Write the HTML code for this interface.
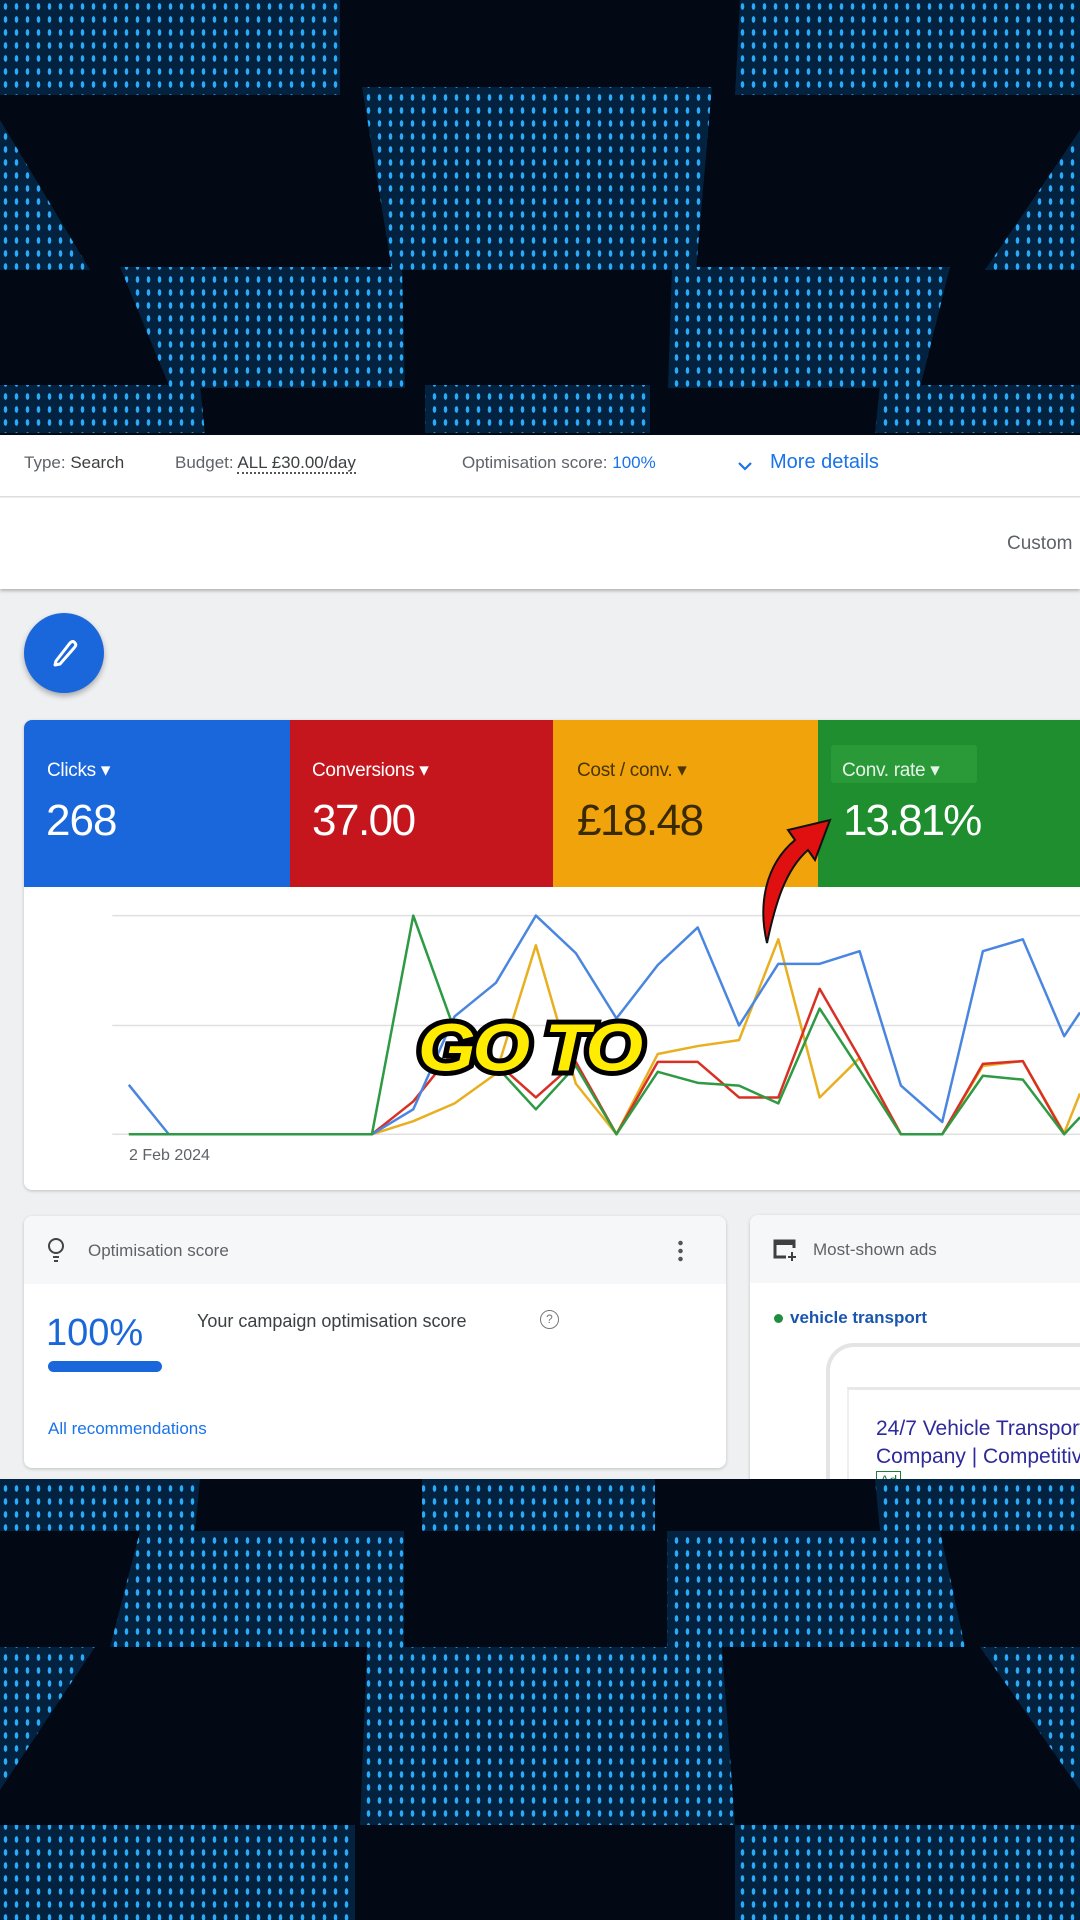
<!DOCTYPE html>
<html><head><meta charset="utf-8"><style>
*{margin:0;padding:0;box-sizing:border-box}
body{width:1080px;height:1920px;overflow:hidden;background:#020814;font-family:"Liberation Sans",sans-serif;position:relative}
.abs{position:absolute}
.t{position:absolute;white-space:nowrap}
</style></head><body>
<svg class="abs" style="left:0;top:0" width="1080" height="1920">
<defs>
<pattern id="d" width="11" height="13" patternUnits="userSpaceOnUse">
<rect width="11" height="13" fill="#03223f"/>
<ellipse cx="5.5" cy="6.5" rx="1.8" ry="3.4" fill="#2aaaf8"/>
</pattern>
</defs>
<rect width="1080" height="1920" fill="#020814"/>
<g fill="url(#d)">
<polygon points="0,0 340,0 340,95 0,95"/>
<polygon points="740,0 1080,0 1080,95 735,95"/>
<polygon points="362,87 712,87 696,270 392,270"/>
<polygon points="0,120 0,270 90,270"/>
<polygon points="1080,130 985,270 1080,270"/>
<polygon points="120,267 402,267 405,388 170,388"/>
<polygon points="672,267 950,267 920,388 668,388"/>
<polygon points="0,385 200,385 205,433 0,433"/>
<polygon points="425,385 650,385 650,433 425,433"/>
<polygon points="880,385 1080,385 1080,433 875,433"/>
<polygon points="0,1479 200,1479 195,1531 0,1531"/>
<polygon points="422,1479 655,1479 655,1531 422,1531"/>
<polygon points="875,1479 1080,1479 1080,1531 880,1531"/>
<polygon points="140,1531 404,1531 404,1647 110,1647"/>
<polygon points="667,1531 940,1531 965,1647 667,1647"/>
<polygon points="367,1647 722,1647 735,1825 360,1825"/>
<polygon points="0,1647 95,1647 0,1790"/>
<polygon points="980,1647 1080,1647 1080,1790"/>
<polygon points="0,1825 355,1825 355,1920 0,1920"/>
<polygon points="735,1825 1080,1825 1080,1920 735,1920"/>
</g>
</svg>

<div class="abs" style="left:0;top:435px;width:1080px;height:1044px;background:#eef0f1;overflow:hidden">
 <div class="abs" style="left:0;top:0;width:1080px;height:62px;background:#fff;border-bottom:1px solid #ddd"></div>
 <div class="t" style="left:24px;top:18px;font-size:17px;color:#5f6368">Type: <span style="color:#3c4043">Search</span></div>
 <div class="t" style="left:175px;top:18px;font-size:17px;color:#5f6368">Budget: <span style="color:#3c4043;border-bottom:2px dotted #555">ALL £30.00/day</span></div>
 <div class="t" style="left:462px;top:18px;font-size:17px;color:#5f6368">Optimisation score: <span style="color:#1a73e8">100%</span></div>
 <svg class="abs" style="left:736px;top:22px" width="18" height="18"><path d="M3 6l6 6 6-6" fill="none" stroke="#1a73e8" stroke-width="2.2"/></svg>
 <div class="t" style="left:770px;top:16px;font-size:20px;color:#1a73e8">More details</div>
 <div class="abs" style="left:0;top:63px;width:1080px;height:91px;background:#fff;box-shadow:0 2px 3px rgba(0,0,0,.25)"></div>
 <div class="t" style="left:1007px;top:98px;font-size:19px;color:#5f6368">Custom</div>
 <div class="abs" style="left:24px;top:178px;width:80px;height:80px;border-radius:50%;background:#1a66db;box-shadow:0 3px 6px rgba(0,0,0,.3)">
  <svg width="80" height="80"><path d="M32 48 L46 30 Q49 27 51 30 Q53 32 50 35 L36 51 L31 52 Z" fill="none" stroke="#fff" stroke-width="3" stroke-linejoin="round"/></svg>
 </div>
 <div class="abs" style="left:24px;top:285px;width:1070px;height:470px;background:#fff;border-radius:8px;box-shadow:0 1px 3px rgba(0,0,0,.2)"></div>
 <div class="abs" style="left:24px;top:285px;width:266px;height:167px;background:#1a66db;border-radius:8px 0 0 0"></div>
 <div class="abs" style="left:290px;top:285px;width:263px;height:167px;background:#c5161e"></div>
 <div class="abs" style="left:553px;top:285px;width:265px;height:167px;background:#f0a30a"></div>
 <div class="abs" style="left:818px;top:285px;width:262px;height:167px;background:#1e8e2e"></div>
 <div class="abs" style="left:831px;top:310px;width:146px;height:38px;background:#2a9a38;border-radius:3px"></div>
 <div class="t" style="left:47px;top:324px;font-size:19px;color:#fff;letter-spacing:-0.3px">Clicks ▾</div>
 <div class="t" style="left:312px;top:324px;font-size:19px;color:#fff;letter-spacing:-0.3px">Conversions ▾</div>
 <div class="t" style="left:577px;top:324px;font-size:19px;color:#4a3500;letter-spacing:-0.3px">Cost / conv. ▾</div>
 <div class="t" style="left:842px;top:324px;font-size:19px;color:#e6f4e8;letter-spacing:-0.3px">Conv. rate ▾</div>
 <div class="t" style="left:46px;top:361px;font-size:44px;color:#fff;letter-spacing:-1px">268</div>
 <div class="t" style="left:312px;top:361px;font-size:44px;color:#fff;letter-spacing:-1.5px">37.00</div>
 <div class="t" style="left:577px;top:361px;font-size:44px;color:#3a2a00;letter-spacing:-1.5px">£18.48</div>
 <div class="t" style="left:843px;top:361px;font-size:44px;color:#fff;letter-spacing:-2px">13.81%</div>
 <div class="t" style="left:129px;top:712px;font-size:16px;color:#5f6368">2 Feb 2024</div>

 <div class="abs" style="left:24px;top:781px;width:702px;height:252px;background:#fff;border-radius:8px;box-shadow:0 1px 3px rgba(0,0,0,.2);overflow:hidden">
  <div style="height:68px;background:#f6f7f8"></div>
  <svg class="abs" style="left:22px;top:20px" width="20" height="30"><circle cx="10" cy="10" r="7" fill="none" stroke="#444" stroke-width="2"/><path d="M7 21h6M8 25h4" stroke="#444" stroke-width="2"/></svg>
  <div class="t" style="left:64px;top:25px;font-size:17px;color:#5f6368">Optimisation score</div>
  <div class="abs" style="left:654px;top:23px;width:5px;height:24px;background:radial-gradient(circle,#555 2px,transparent 2.5px) 0 0/5px 8px"></div>
  <div class="t" style="left:22px;top:96px;font-size:38px;color:#1a66db">100%</div>
  <div class="abs" style="left:24px;top:145px;width:114px;height:11px;background:#1a66db;border-radius:6px"></div>
  <div class="t" style="left:173px;top:95px;font-size:18px;color:#3c4043">Your campaign optimisation score</div>
  <div class="abs" style="left:516px;top:94px;width:19px;height:19px;border:1.5px solid #777;border-radius:50%;font-size:12px;color:#777;text-align:center;line-height:16px">?</div>
  <div class="t" style="left:24px;top:203px;font-size:17px;color:#1a73e8">All recommendations</div>
 </div>

 <div class="abs" style="left:750px;top:780px;width:360px;height:280px;background:#fff;border-radius:8px;box-shadow:0 1px 3px rgba(0,0,0,.2);overflow:hidden">
  <div style="height:68px;background:#f6f7f8"></div>
  <svg class="abs" style="left:22px;top:22px" width="30" height="30"><path d="M14 20H3V4h19v7" fill="none" stroke="#3c4043" stroke-width="3"/><path d="M3 6h19" stroke="#3c4043" stroke-width="4"/><path d="M20 15v9M16 20h8" stroke="#3c4043" stroke-width="2"/></svg>
  <div class="t" style="left:63px;top:25px;font-size:17px;color:#5f6368">Most-shown ads</div>
  <div class="abs" style="left:24px;top:99px;width:9px;height:9px;border-radius:50%;background:#1e8e3e"></div>
  <div class="t" style="left:40px;top:93px;font-size:17px;color:#1a56b0;font-weight:bold">vehicle transport</div>
  <div class="abs" style="left:76px;top:128px;width:330px;height:200px;border:4px solid #e4e4e4;border-radius:28px"></div>
  <div class="abs" style="left:97px;top:172px;width:300px;height:120px;border:2px solid #eee;border-top:3px solid #e8e8e8"></div>
  <div class="t" style="left:126px;top:200px;font-size:21px;color:#2e2a9a;line-height:28px">24/7 Vehicle Transport<br>Company | Competitive</div>
  <div class="t" style="left:126px;top:256px;font-size:14px;color:#188038;border:1px solid #188038;padding:0 3px">Ad</div>
 </div>
</div>

<svg class="abs" style="left:0;top:880px" width="1080" height="620" viewBox="0 0 1568 1568" preserveAspectRatio="none">
<g fill="none" stroke-width="2.5" stroke-linejoin="round">
<path d="M163 90H1568M163 368H1568M163 643H1568" stroke="#e0e0e0" vector-effect="non-scaling-stroke" stroke-width="1.5"/>
<path vector-effect="non-scaling-stroke" stroke="#e8b020" d="M540,643 600,610 660,565 720,490 778,165 836,515 895,643 955,440 1013,420 1073,405 1130,150 1190,550 1248,450 1308,643 1368,643 1427,470 1485,458 1545,640 1568,540"/>
<path vector-effect="non-scaling-stroke" stroke="#d93025" d="M540,643 600,560 660,430 720,460 778,550 836,460 895,643 955,460 1013,460 1073,550 1130,550 1190,275 1248,450 1308,643 1368,643 1427,465 1485,458 1545,643"/>
<path vector-effect="non-scaling-stroke" stroke="#4a86e0" d="M187,518 245,643 540,643 600,580 660,345 720,260 778,90 836,185 895,350 955,215 1013,120 1073,368 1130,212 1190,212 1248,180 1308,520 1368,612 1427,180 1485,150 1545,395 1568,335"/>
<path vector-effect="non-scaling-stroke" stroke="#2e9a44" d="M187,643 540,643 600,90 660,380 720,470 778,580 836,470 895,643 955,485 1013,513 1073,520 1130,565 1190,325 1248,480 1308,643 1368,643 1427,495 1485,505 1545,643 1568,600"/>
</g>
</svg>

<svg class="abs" style="left:740px;top:805px" width="100" height="150">
<path d="M27 138 C18 100 25 60 55 35 L48 25 L90 15 L75 55 L68 45 C45 65 35 100 27 138 Z" fill="#e01010" stroke="#111" stroke-width="2"/>
</svg>
<div class="t" style="left:418px;top:1005px;font-size:74px;font-weight:bold;font-style:italic;color:#ffec00;-webkit-text-stroke:11px #000;paint-order:stroke fill;letter-spacing:-3px;transform:scaleY(0.9)">GO TO</div>
</body></html>
